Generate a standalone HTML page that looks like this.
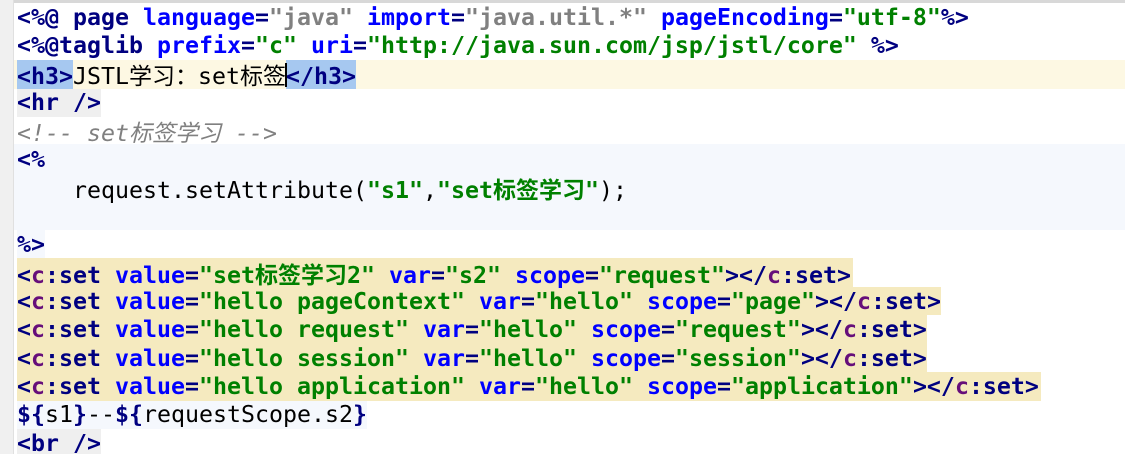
<!DOCTYPE html>
<html><head><meta charset="utf-8"><style>
body{margin:0;width:1125px;height:454px;overflow:hidden;background:#fff;position:relative;font-family:"DejaVu Sans Mono","Liberation Mono","Noto Sans CJK SC",monospace;font-size:23.25px;}
.gut{position:absolute;left:0;top:0;width:13px;height:454px;background:#f0f0f0;border-right:1px solid #e0e0e0}
.top{position:absolute;left:0;top:0;width:1125px;height:3px;background:#d8d8d8}
.l{position:absolute;left:17px;height:28.43px;line-height:28.43px;white-space:pre;color:#000}
.bg{position:absolute}
.t{color:#000080;font-weight:bold}
.a{color:#0000ff;font-weight:bold}
.v{color:#008000;font-weight:bold}
.g{color:#808080;font-weight:bold}
.p{color:#660e7a;font-weight:bold}
.c{color:#808080;font-style:italic}
.z{font-family:"Noto Sans CJK SC",sans-serif;font-size:23px}
</style></head><body>
<div class="top"></div>
<div class="gut"></div>
<div class="bg" style="left:14px;top:60px;width:1111px;height:29px;background:#fdf8e3"></div>
<div class="bg" style="left:17px;top:60px;width:56px;height:29px;background:#a6c8f0"></div>
<div class="bg" style="left:286px;top:60px;width:70px;height:29px;background:#a6c8f0"></div>
<div class="bg" style="left:17px;top:89px;width:84px;height:28px;background:#efefef"></div>
<div class="bg" style="left:14px;top:144px;width:1111px;height:86px;background:#f5f8fd"></div>
<div class="bg" style="left:17px;top:230px;width:28px;height:28px;background:#f5f8fd"></div>
<div class="bg" style="left:17px;top:258px;width:836px;height:29px;background:#f5eabf"></div>
<div class="bg" style="left:17px;top:287px;width:924px;height:28px;background:#f5eabf"></div>
<div class="bg" style="left:17px;top:315px;width:910px;height:29px;background:#f5eabf"></div>
<div class="bg" style="left:17px;top:344px;width:910px;height:28px;background:#f5eabf"></div>
<div class="bg" style="left:17px;top:372px;width:1024px;height:29px;background:#f5eabf"></div>
<div class="bg" style="left:17px;top:401px;width:350px;height:28px;background:#f5f8fd"></div>
<div class="bg" style="left:17px;top:429px;width:84px;height:25px;background:#efefef"></div>
<div class="bg" style="left:285px;top:63px;width:2px;height:24px;background:#000;z-index:2"></div>

<div class="l" style="top:4px"><span class="t">&lt;%@ page </span><span class="a">language</span><span class="t">=</span><span class="g">"java"</span> <span class="a">import</span><span class="t">=</span><span class="g">"java.util.*"</span> <span class="a">pageEncoding</span><span class="t">=</span><span class="v">"utf-8"</span><span class="t">%&gt;</span></div>
<div class="l" style="top:32px"><span class="t">&lt;%@taglib </span><span class="a">prefix</span><span class="t">=</span><span class="v">"c"</span> <span class="a">uri</span><span class="t">=</span><span class="v">"http://java.sun.com/jsp/jstl/core"</span> <span class="t">%&gt;</span></div>
<div class="l" style="top:60px"><span class="t">&lt;h3&gt;</span>JSTL<span class="z">学习：</span>set<span class="z">标签</span><span class="t">&lt;/h3&gt;</span></div>
<div class="l" style="top:89px"><span class="t">&lt;hr /&gt;</span></div>
<div class="l c" style="top:117px">&lt;!-- set<span class="z">标签学习</span> --&gt;</div>
<div class="l" style="top:146px"><span class="t">&lt;%</span></div>
<div class="l" style="top:174px">    request.setAttribute(<span class="v">"s1"</span>,<span class="v">"set<span class="z">标签学习</span>"</span>);</div>
<div class="l" style="top:231px"><span class="t">%&gt;</span></div>
<div class="l" style="top:259px"><span class="t">&lt;</span><span class="p">c</span><span class="t">:set </span><span class="a">value</span><span class="t">=</span><span class="v">"set<span class="z">标签学习</span>2"</span> <span class="a">var</span><span class="t">=</span><span class="v">"s2"</span> <span class="a">scope</span><span class="t">=</span><span class="v">"request"</span><span class="t">&gt;&lt;/</span><span class="p">c</span><span class="t">:set&gt;</span></div>
<div class="l" style="top:288px"><span class="t">&lt;</span><span class="p">c</span><span class="t">:set </span><span class="a">value</span><span class="t">=</span><span class="v">"hello pageContext"</span> <span class="a">var</span><span class="t">=</span><span class="v">"hello"</span> <span class="a">scope</span><span class="t">=</span><span class="v">"page"</span><span class="t">&gt;&lt;/</span><span class="p">c</span><span class="t">:set&gt;</span></div>
<div class="l" style="top:316px"><span class="t">&lt;</span><span class="p">c</span><span class="t">:set </span><span class="a">value</span><span class="t">=</span><span class="v">"hello request"</span> <span class="a">var</span><span class="t">=</span><span class="v">"hello"</span> <span class="a">scope</span><span class="t">=</span><span class="v">"request"</span><span class="t">&gt;&lt;/</span><span class="p">c</span><span class="t">:set&gt;</span></div>
<div class="l" style="top:345px"><span class="t">&lt;</span><span class="p">c</span><span class="t">:set </span><span class="a">value</span><span class="t">=</span><span class="v">"hello session"</span> <span class="a">var</span><span class="t">=</span><span class="v">"hello"</span> <span class="a">scope</span><span class="t">=</span><span class="v">"session"</span><span class="t">&gt;&lt;/</span><span class="p">c</span><span class="t">:set&gt;</span></div>
<div class="l" style="top:373px"><span class="t">&lt;</span><span class="p">c</span><span class="t">:set </span><span class="a">value</span><span class="t">=</span><span class="v">"hello application"</span> <span class="a">var</span><span class="t">=</span><span class="v">"hello"</span> <span class="a">scope</span><span class="t">=</span><span class="v">"application"</span><span class="t">&gt;&lt;/</span><span class="p">c</span><span class="t">:set&gt;</span></div>
<div class="l" style="top:401px"><span class="t">${</span>s1<span class="t">}</span>--<span class="t">${</span>requestScope.s2<span class="t">}</span></div>
<div class="l" style="top:430px"><span class="t">&lt;br /&gt;</span></div>
</body></html>
